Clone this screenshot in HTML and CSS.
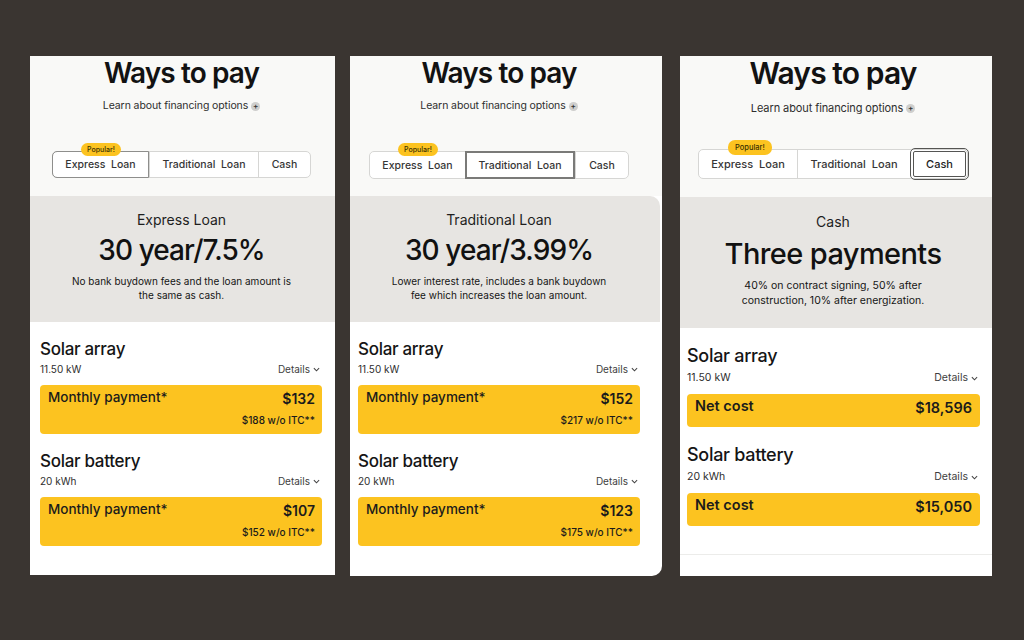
FILE: index.html
```html
<!DOCTYPE html>
<html>
<head>
<meta charset="utf-8">
<link rel="stylesheet" href="styles.css">
</head>
<body>
<div class="stage">

  <section class="panel p1">
    <header class="head">
      <h1 class="title">Ways to pay</h1>
      <p class="learn">Learn about financing options <span class="plus">+</span></p>
      <div class="tabs">
        <div class="tab is-active"><span class="badge">Popular!</span>Express&nbsp; Loan</div>
        <div class="tab">Traditional&nbsp; Loan</div>
        <div class="tab">Cash</div>
      </div>
    </header>
    <div class="summary">
      <div class="sum-label">Express Loan</div>
      <div class="sum-big">30 year/7.5%</div>
      <p class="sum-desc">No bank buydown fees and the loan amount is<br>the same as cash.</p>
    </div>
    <div class="items">
      <div class="item">
        <h2 class="item-title">Solar array</h2>
        <div class="item-meta"><span>11.50 kW</span><span class="details">Details <svg class="chev" viewBox="0 0 8 5"><path d="M1 1l3 3 3-3"/></svg></span></div>
        <div class="pay">
          <div class="pay-row"><span class="pay-label">Monthly payment*</span><span class="pay-amt">$132</span></div>
          <div class="pay-sub">$188 w/o ITC**</div>
        </div>
      </div>
      <div class="item">
        <h2 class="item-title">Solar battery</h2>
        <div class="item-meta"><span>20 kWh</span><span class="details">Details <svg class="chev" viewBox="0 0 8 5"><path d="M1 1l3 3 3-3"/></svg></span></div>
        <div class="pay">
          <div class="pay-row"><span class="pay-label">Monthly payment*</span><span class="pay-amt">$107</span></div>
          <div class="pay-sub">$152 w/o ITC**</div>
        </div>
      </div>
    </div>
  </section>

  <section class="panel p2">
    <header class="head">
      <h1 class="title">Ways to pay</h1>
      <p class="learn">Learn about financing options <span class="plus">+</span></p>
      <div class="tabs">
        <div class="tab"><span class="badge">Popular!</span>Express&nbsp; Loan</div>
        <div class="tab is-active">Traditional&nbsp; Loan</div>
        <div class="tab">Cash</div>
      </div>
    </header>
    <div class="summary">
      <div class="sum-label">Traditional Loan</div>
      <div class="sum-big">30 year/3.99%</div>
      <p class="sum-desc">Lower interest rate, includes a bank buydown<br>fee which increases the loan amount.</p>
    </div>
    <div class="items">
      <div class="item">
        <h2 class="item-title">Solar array</h2>
        <div class="item-meta"><span>11.50 kW</span><span class="details">Details <svg class="chev" viewBox="0 0 8 5"><path d="M1 1l3 3 3-3"/></svg></span></div>
        <div class="pay">
          <div class="pay-row"><span class="pay-label">Monthly payment*</span><span class="pay-amt">$152</span></div>
          <div class="pay-sub">$217 w/o ITC**</div>
        </div>
      </div>
      <div class="item">
        <h2 class="item-title">Solar battery</h2>
        <div class="item-meta"><span>20 kWh</span><span class="details">Details <svg class="chev" viewBox="0 0 8 5"><path d="M1 1l3 3 3-3"/></svg></span></div>
        <div class="pay">
          <div class="pay-row"><span class="pay-label">Monthly payment*</span><span class="pay-amt">$123</span></div>
          <div class="pay-sub">$175 w/o ITC**</div>
        </div>
      </div>
    </div>
  </section>

  <section class="panel p3">
    <header class="head">
      <h1 class="title">Ways to pay</h1>
      <p class="learn">Learn about financing options <span class="plus">+</span></p>
      <div class="tabs">
        <div class="tab"><span class="badge">Popular!</span>Express&nbsp; Loan</div>
        <div class="tab">Traditional&nbsp; Loan</div>
        <div class="tab is-active">Cash</div>
      </div>
    </header>
    <div class="summary">
      <div class="sum-label">Cash</div>
      <div class="sum-big">Three payments</div>
      <p class="sum-desc">40% on contract signing, 50% after<br>construction, 10% after energization.</p>
    </div>
    <div class="items">
      <div class="item">
        <h2 class="item-title">Solar array</h2>
        <div class="item-meta"><span>11.50 kW</span><span class="details">Details <svg class="chev" viewBox="0 0 8 5"><path d="M1 1l3 3 3-3"/></svg></span></div>
        <div class="pay pay-net">
          <div class="pay-row"><span class="pay-label">Net cost</span><span class="pay-amt">$18,596</span></div>
        </div>
      </div>
      <div class="item">
        <h2 class="item-title">Solar battery</h2>
        <div class="item-meta"><span>20 kWh</span><span class="details">Details <svg class="chev" viewBox="0 0 8 5"><path d="M1 1l3 3 3-3"/></svg></span></div>
        <div class="pay pay-net">
          <div class="pay-row"><span class="pay-label">Net cost</span><span class="pay-amt">$15,050</span></div>
        </div>
      </div>
    </div>
    <div class="divider"></div>
  </section>

</div>
</body>
</html>
```

FILE: styles.css
```css
* { box-sizing: border-box; margin: 0; padding: 0; }

html, body {
  width: 1024px;
  height: 640px;
  overflow: hidden;
}

body {
  background: #3a3531;
  font-family: Inter, "Noto Sans", sans-serif;
  color: #1b1b1b;
}

.stage {
  display: flex;
  align-items: flex-start;
  padding: 56px 0 0 30px;
  gap: 15px;
}

.panel {
  background: #ffffff;
  display: flex;
  flex-direction: column;
  overflow: hidden;
}

.p1 { width: 305px; height: 519px; }
.p2 { width: 312px; height: 520px; border-bottom-right-radius: 10px; }
.p3 { width: 312px; height: 520px; margin-left: 3px; }

/* header */
.head {
  background: #f9f9f7;
  display: flex;
  flex-direction: column;
  align-items: center;
}
.p1 .head { padding: 0 2px 18px 0; }
.p2 .head { padding: 0 14px 17px 0; }
.p3 .head { padding: 0 6px 18px 0; }

.title {
  font-size: 28px;
  line-height: 34px;
  font-weight: 600;
  letter-spacing: -0.9px;
  color: #121212;
}
.p3 .title { font-size: 30px; }

.learn {
  margin-top: 8px;
  font-size: 10.5px;
  line-height: 16px;
  color: #2e2e2e;
  display: flex;
  align-items: center;
  gap: 3px;
  letter-spacing: -0.1px;
}
.p3 .learn { margin-top: 10px; font-size: 11px; }

.plus {
  width: 9px;
  height: 9px;
  border-radius: 50%;
  background: #cfcfcd;
  color: #333;
  font-size: 8px;
  line-height: 9px;
  text-align: center;
  font-weight: 600;
}

.tabs {
  margin-top: 37px;
  display: grid;
  height: 27px;
  border: 1px solid #d6d6d4;
  border-radius: 5px;
  background: #ffffff;
}
.p1 .tabs { grid-template-columns: 96px 109px 52px; }
.p2 .tabs { grid-template-columns: 95px 110px 53px; height: 28px; }
.p3 .tabs { grid-template-columns: 98px 113px 57px; height: 30px; margin-top: 33px; }

.tab {
  position: relative;
  display: flex;
  align-items: center;
  justify-content: center;
  font-size: 10.5px;
  font-weight: 500;
  color: #363636;
  border-left: 1px solid #d6d6d4;
  white-space: nowrap;
}
.p3 .tab { font-size: 11px; }
.tab:first-child { border-left: none; }

.p1 .tab.is-active {
  border: 1.5px solid #8e8e8c;
  border-radius: 5px 0 0 5px;
  margin: -1px 0 -1px -1px;
}
.p2 .tab.is-active {
  border: 2px solid #7a7a78;
  margin: -1px 0;
}
.p3 .tab.is-active {
  border: 4px double #555553;
  border-radius: 5px;
  margin: -2px -2px -2px 0;
  color: #222;
}

.badge {
  position: absolute;
  top: -9px;
  left: 28px;
  background: #fcc320;
  color: #3a3000;
  font-size: 7px;
  line-height: 13px;
  padding: 0 6px;
  border-radius: 7px;
  font-weight: 500;
}
.p3 .badge { left: 29px; top: -10px; line-height: 15px; font-size: 7.5px; padding: 0 7px; }

/* summary */
.summary {
  background: #e7e5e2;
  display: flex;
  flex-direction: column;
  align-items: center;
  text-align: center;
  padding: 15px 0 20px;
}
.p1 .summary { padding-right: 2px; }
.p2 .summary { margin-right: 2px; padding-right: 12px; border-top-right-radius: 10px; }
.p3 .summary { padding: 16px 6px 20px 0; }

.sum-label {
  font-size: 14px;
  line-height: 18px;
  color: #1e1e1e;
}
.sum-big {
  margin-top: 5px;
  font-size: 28px;
  line-height: 32px;
  font-weight: 500;
  letter-spacing: -0.9px;
  color: #111;
}
.p3 .sum-big { font-size: 29px; line-height: 34px; margin-top: 6px; letter-spacing: -0.6px; }

.sum-desc {
  margin-top: 8px;
  font-size: 10px;
  line-height: 14px;
  color: #151515;
}
.p3 .sum-desc { font-size: 10.5px; line-height: 15px; margin-top: 7px; }

/* items */
.items {
  display: flex;
  flex-direction: column;
  gap: 16px;
  padding-top: 16px;
}
.p1 .items { padding-left: 10px; padding-right: 13px; }
.p2 .items { padding-left: 8px; padding-right: 22px; }
.p3 .items { padding-left: 7px; padding-right: 12px; padding-top: 17px; gap: 17px; }

.item-title {
  font-size: 17px;
  line-height: 22px;
  font-weight: 500;
  color: #151515;
  letter-spacing: -0.3px;
}
.p3 .item-title { font-size: 18px; }

.item-meta {
  margin-top: 2px;
  display: flex;
  justify-content: space-between;
  align-items: center;
  font-size: 10px;
  line-height: 14px;
  color: #2e2e2e;
  padding-right: 2px;
}
.p3 .item-meta { margin-top: 4px; font-size: 10.5px; }

.details {
  display: flex;
  align-items: center;
  gap: 3px;
  color: #3e3e3e;
}
.chev {
  width: 7px;
  height: 5px;
  fill: none;
  stroke: #444;
  stroke-width: 1.2;
}

.pay {
  margin-top: 9px;
  background: #fcc320;
  border-radius: 4px;
  padding: 3px 7px 9px 8px;
  height: 49px;
}
.pay-row {
  display: flex;
  justify-content: space-between;
  align-items: flex-start;
}
.pay-label {
  font-size: 13.5px;
  line-height: 18px;
  font-weight: 500;
  color: #1b1b1b;
}
.pay-amt {
  margin-top: 2px;
  font-size: 14px;
  line-height: 18px;
  font-weight: 600;
  color: #1b1b1b;
}
.pay-sub {
  margin-top: 5px;
  text-align: right;
  font-size: 10px;
  line-height: 14px;
  font-weight: 500;
  color: #1b1b1b;
}

.pay-net {
  height: 33px;
  padding: 3px 8px 0 8px;
}
.pay-net .pay-label { font-size: 14.5px; font-weight: 600; }
.pay-net .pay-amt { font-size: 14.5px; font-weight: 600; }

.divider {
  margin-top: 28px;
  height: 1px;
  background: #ececea;
}
```
